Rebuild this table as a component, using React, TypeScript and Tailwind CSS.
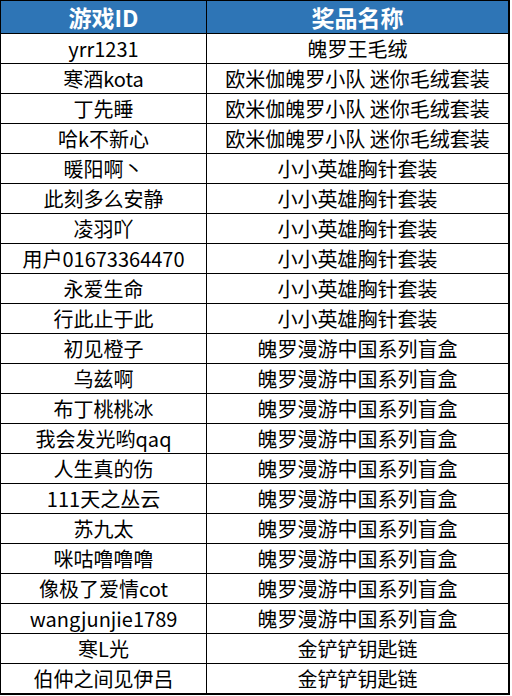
const rows: [string, string][] = [
  ["yrr1231", "魄罗王毛绒"],
  ["寒酒kota", "欧米伽魄罗小队 迷你毛绒套装"],
  ["丁先睡", "欧米伽魄罗小队 迷你毛绒套装"],
  ["哈k不新心", "欧米伽魄罗小队 迷你毛绒套装"],
  ["暖阳啊丶", "小小英雄胸针套装"],
  ["此刻多么安静", "小小英雄胸针套装"],
  ["凌羽吖", "小小英雄胸针套装"],
  ["用户01673364470", "小小英雄胸针套装"],
  ["永爱生命", "小小英雄胸针套装"],
  ["行此止于此", "小小英雄胸针套装"],
  ["初见橙子", "魄罗漫游中国系列盲盒"],
  ["乌兹啊", "魄罗漫游中国系列盲盒"],
  ["布丁桃桃冰", "魄罗漫游中国系列盲盒"],
  ["我会发光哟qaq", "魄罗漫游中国系列盲盒"],
  ["人生真的伤", "魄罗漫游中国系列盲盒"],
  ["111天之丛云", "魄罗漫游中国系列盲盒"],
  ["苏九太", "魄罗漫游中国系列盲盒"],
  ["咪咕噜噜噜", "魄罗漫游中国系列盲盒"],
  ["像极了爱情cot", "魄罗漫游中国系列盲盒"],
  ["wangjunjie1789", "魄罗漫游中国系列盲盒"],
  ["寒L光", "金铲铲钥匙链"],
  ["伯仲之间见伊吕", "金铲铲钥匙链"],
]

export default function App() {
  return (
    <div className="w-[512px] h-[696px] bg-white font-['Noto_Sans_CJK_SC','Noto_Sans',sans-serif]">
      <div className="w-[510px] border-t border-l border-r-2 border-b-2 border-black">
        <div className="grid grid-cols-[206px_1fr] h-[33px] bg-[#2e75b6] border-b border-black text-white font-bold text-[23px] leading-none">
          <div className="flex items-center justify-center border-r border-black">游戏ID</div>
          <div className="flex items-center justify-center">奖品名称</div>
        </div>
        {rows.map(([id, prize], i) => (
          <div
            key={i}
            className={`grid grid-cols-[206px_1fr] text-[20px] leading-none text-black ${i < rows.length - 1 ? "h-[30px] border-b border-black" : "h-[29px]"}`}
          >
            <div className="flex items-center justify-center border-r border-black">{id}</div>
            <div className="flex items-center justify-center">{prize}</div>
          </div>
        ))}
      </div>
    </div>
  )
}
